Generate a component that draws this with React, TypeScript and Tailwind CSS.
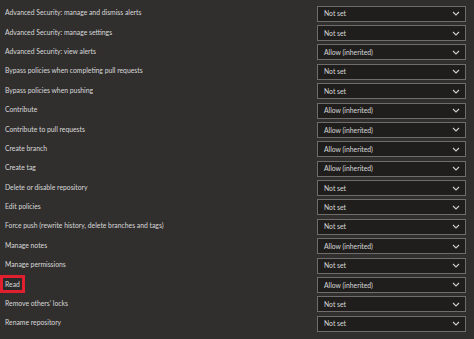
const rows: { label: string; value: string }[] = [
  { label: "Advanced Security: manage and dismiss alerts", value: "Not set" },
  { label: "Advanced Security: manage settings", value: "Not set" },
  { label: "Advanced Security: view alerts", value: "Allow (inherited)" },
  { label: "Bypass policies when completing pull requests", value: "Not set" },
  { label: "Bypass policies when pushing", value: "Not set" },
  { label: "Contribute", value: "Allow (inherited)" },
  { label: "Contribute to pull requests", value: "Allow (inherited)" },
  { label: "Create branch", value: "Allow (inherited)" },
  { label: "Create tag", value: "Allow (inherited)" },
  { label: "Delete or disable repository", value: "Not set" },
  { label: "Edit policies", value: "Not set" },
  { label: "Force push (rewrite history, delete branches and tags)", value: "Not set" },
  { label: "Manage notes", value: "Allow (inherited)" },
  { label: "Manage permissions", value: "Not set" },
  { label: "Read", value: "Allow (inherited)" },
  { label: "Remove others' locks", value: "Not set" },
  { label: "Rename repository", value: "Not set" },
];

function Chevron() {
  return (
    <svg width="8" height="5" viewBox="0 0 8 5" fill="none" className="shrink-0">
      <path d="M1 1l3 3 3-3" stroke="#cfcfcf" strokeWidth="1.1" />
    </svg>
  );
}

export default function App() {
  return (
    <div className="h-[339px] w-[474px] overflow-hidden bg-[#302f2e] pt-[4px] font-['Lato','Liberation_Sans',sans-serif] text-[#d8d8d8]">
      {rows.map((row) => (
        <div key={row.label} className="flex h-[19.375px] items-center pl-[5px] pr-[8px]">
          <div className="flex-1 pb-[2px] text-[6.8px] leading-none">
            {row.label === "Read" ? (
              <span className="-ml-[5px] inline-block border-[3px] border-[#e0202e] bg-[#2a2a2a] py-[3px] pl-[2px] pr-[2px]">
                Read
              </span>
            ) : (
              row.label
            )}
          </div>
          <div className="flex h-[16px] w-[149px] items-center justify-between border border-[#6e6d6c] bg-[#1f1e1d] pl-[6px] pr-[5px] text-[6.8px] leading-none">
            <span>{row.value}</span>
            <Chevron />
          </div>
        </div>
      ))}
    </div>
  );
}
